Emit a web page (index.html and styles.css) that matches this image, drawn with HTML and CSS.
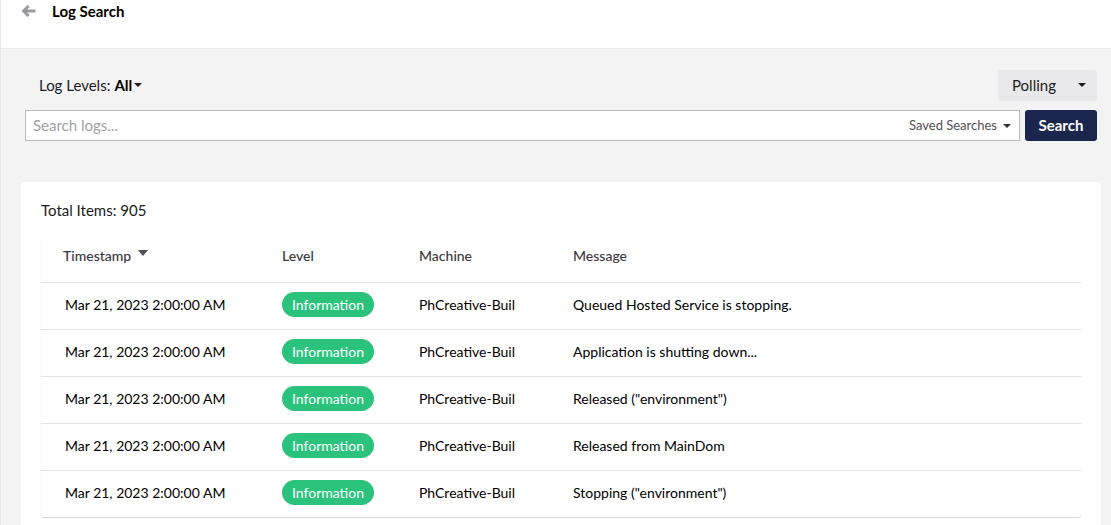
FILE: index.html
```html
<!DOCTYPE html>
<html>
<head>
<meta charset="utf-8">
<link rel="stylesheet" href="styles.css">
</head>
<body>
<div class="page">
  <header class="topbar">
    <span class="back">
      <svg width="14" height="12" viewBox="0 0 14 12"><path d="M6.6 1 L1.6 6 L6.6 11 M2 6 H13.5" fill="none" stroke="#9a9aa0" stroke-width="3" stroke-linejoin="miter"/></svg>
    </span>
    <h1 class="title">Log Search</h1>
  </header>
  <main class="content">
    <div class="controls">
      <div class="filters">
        <span class="levels">Log Levels: <b>All</b><span class="caret"></span></span>
        <button class="polling">Polling <span class="caret"></span></button>
      </div>
      <div class="searchrow">
        <div class="searchbox">
          <input class="searchinput" type="text" placeholder="Search logs...">
          <span class="saved">Saved Searches <span class="caret small"></span></span>
        </div>
        <button class="searchbtn">Search</button>
      </div>
    </div>
    <section class="card">
      <div class="total">Total Items: 905</div>
      <div class="table">
        <div class="row head">
          <div class="cell c1">Timestamp <span class="sort"></span></div>
          <div class="cell">Level</div>
          <div class="cell">Machine</div>
          <div class="cell">Message</div>
        </div>
        <div class="row">
          <div class="cell c1 ts">Mar 21, 2023 2:00:00 AM</div>
          <div class="cell"><span class="badge">Information</span></div>
          <div class="cell">PhCreative-Buil</div>
          <div class="cell">Queued Hosted Service is stopping.</div>
        </div>
        <div class="row">
          <div class="cell c1 ts">Mar 21, 2023 2:00:00 AM</div>
          <div class="cell"><span class="badge">Information</span></div>
          <div class="cell">PhCreative-Buil</div>
          <div class="cell">Application is shutting down...</div>
        </div>
        <div class="row">
          <div class="cell c1 ts">Mar 21, 2023 2:00:00 AM</div>
          <div class="cell"><span class="badge">Information</span></div>
          <div class="cell">PhCreative-Buil</div>
          <div class="cell">Released ("environment")</div>
        </div>
        <div class="row">
          <div class="cell c1 ts">Mar 21, 2023 2:00:00 AM</div>
          <div class="cell"><span class="badge">Information</span></div>
          <div class="cell">PhCreative-Buil</div>
          <div class="cell">Released from MainDom</div>
        </div>
        <div class="row">
          <div class="cell c1 ts">Mar 21, 2023 2:00:00 AM</div>
          <div class="cell"><span class="badge">Information</span></div>
          <div class="cell">PhCreative-Buil</div>
          <div class="cell">Stopping ("environment")</div>
        </div>
      </div>
    </section>
  </main>
</div>
</body>
</html>
```

FILE: styles.css
```css
* { box-sizing: border-box; }
html, body { margin: 0; padding: 0; height: 100%; overflow: hidden; }
body {
  font-family: Lato, "Open Sans", "Liberation Sans", sans-serif;
  color: #1b1b1d;
  background: #f4f3f4;
}
.page {
  min-height: 100%;
  border-left: 1px solid #e6e5e8;
}
.topbar {
  height: 49px;
  background: #ffffff;
  border-bottom: 1px solid #e9e8eb;
  display: flex;
  align-items: flex-start;
  padding: 3px 0 0 21px;
}
.back {
  display: flex;
  width: 14px;
  height: 16px;
  align-items: center;
}
.title {
  margin: 0 0 0 16px;
  font-size: 15px;
  font-weight: 700;
  color: #000;
  line-height: 16px;
}
.content {
  padding: 21px 0 0 0;
}
.controls {
  padding: 0 14px 0 24px;
}
.filters {
  display: flex;
  justify-content: space-between;
  align-items: center;
  height: 31px;
}
.levels {
  font-size: 15px;
  padding-left: 14px;
  padding-bottom: 2px;
  color: #1b1b1d;
  display: flex;
  align-items: center;
}
.levels b { font-weight: 700; margin-left: 4px; color: #000; }
.caret {
  display: inline-block;
  width: 0; height: 0;
  border-left: 4px solid transparent;
  border-right: 4px solid transparent;
  border-top: 4px solid #1b1b1d;
  margin-left: 2px;
  margin-top: 1px;
}
.caret.small { border-top-color: #303033; margin-left: 6px; margin-top: 2px; }
.polling {
  width: 99px;
  height: 31px;
  border: none;
  border-radius: 3px;
  background: #e9e9eb;
  font-family: inherit;
  font-size: 15px;
  color: #1b1b1d;
  display: flex;
  align-items: center;
  justify-content: space-between;
  padding: 0 11px 2px 14px;
}
.searchrow {
  display: flex;
  gap: 5px;
  margin-top: 9px;
  height: 31px;
}
.searchbox {
  flex: 1;
  display: flex;
  align-items: center;
  background: #fff;
  border: 1px solid #bbbabf;
}
.searchinput {
  flex: 1;
  border: none;
  outline: none;
  height: 100%;
  font-family: inherit;
  font-size: 15px;
  padding: 0 0 2px 7px;
  background: transparent;
}
.searchinput::placeholder { color: #a2a1a6; }
.saved {
  font-size: 13px;
  color: #515054;
  display: flex;
  align-items: center;
  padding-right: 8px;
  padding-bottom: 1px;
}
.searchbtn {
  width: 72px;
  border: none;
  border-radius: 3px;
  background: #1b264f;
  color: #fff;
  font-family: inherit;
  font-size: 15px;
  font-weight: 700;
  padding: 0 0 2px 0;
}
.card {
  margin: 41px 10px 0 20px;
  background: #fff;
  border-radius: 3px;
  padding: 20px 20px 30px 20px;
  height: 400px;
}
.total {
  font-size: 15px;
  color: #1b1b1d;
  line-height: 16px;
}
.table {
  margin-top: 16px;
  box-shadow: 0 1px 1px rgba(0,0,0,0.16);
  border-radius: 3px;
}
.row {
  display: grid;
  grid-template-columns: 241px 137px 154px 1fr;
  align-items: center;
  height: 47px;
  border-top: 1px solid #e6e5e8;
  font-size: 14px;
  color: #000;
  padding-bottom: 4px;
}
.row.head {
  border-top: none;
  height: 48px;
  color: #3a393d;
  font-weight: 500;
  padding-bottom: 6px;
}
.cell { white-space: nowrap; }
.c1 { padding-left: 22px; display: flex; align-items: center; }
.ts { padding-left: 24px; }
.sort {
  display: inline-block;
  width: 0; height: 0;
  border-left: 5px solid transparent;
  border-right: 5px solid transparent;
  border-top: 6px solid #515054;
  margin-left: 7px;
  margin-top: -4px;
}
.badge {
  display: inline-block;
  background: #2bc37c;
  color: #fff;
  border-radius: 13px;
  height: 25px;
  line-height: 25px;
  padding: 0 10px;
  font-size: 14px;
  margin-top: 1px;
}
```
